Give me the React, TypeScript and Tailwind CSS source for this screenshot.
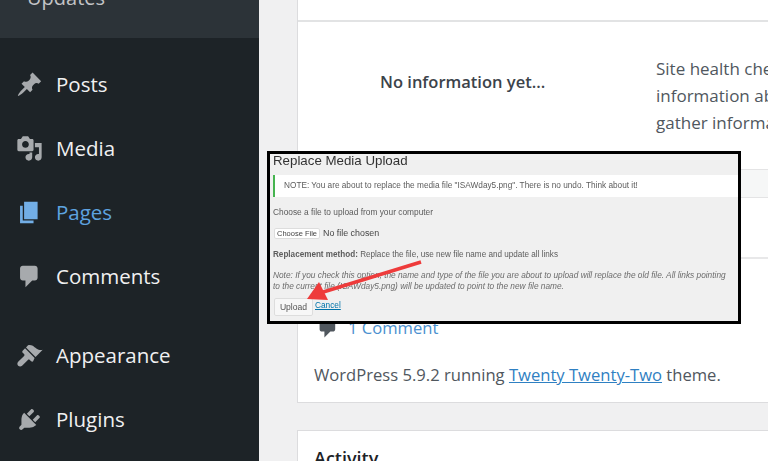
import React from "react";

const ICONS = {
  post: "M10.44 3.02l1.82-1.82 6.36 6.35-1.83 1.82c-1.05-.68-2.48-.57-3.41.36l-.75.75c-.92.93-1.04 2.35-.35 3.41l-1.83 1.82-2.41-2.41-2.8 2.79c-.42.42-3.38 2.71-3.8 2.29s1.86-3.39 2.28-3.81l2.79-2.79L4.1 9.36l1.83-1.82c1.05.69 2.48.57 3.4-.36l.75-.75c.93-.92 1.05-2.35.36-3.41z",
  media: "M13 11V4c0-.55-.45-1-1-1h-1.67L9 1H5L3.67 3H2c-.55 0-1 .45-1 1v7c0 .55.45 1 1 1h10c.55 0 1-.45 1-1zM7 4.5c1.38 0 2.5 1.12 2.5 2.5S8.38 9.5 7 9.5 4.5 8.38 4.5 7 5.62 4.5 7 4.5zM14 6h5v10.5c0 1.38-1.12 2.5-2.5 2.5S14 17.88 14 16.5s1.12-2.5 2.5-2.5c.17 0 .34.02.5.05V9h-3V6zm-4 8.05V13h2v3.5c0 1.38-1.12 2.5-2.5 2.5S7 17.88 7 16.5 8.12 14 9.5 14c.17 0 .34.02.5.05z",
  page: "M6 15V2h10v13H6zm-1 1h8v2H3V5h2v11z",
  comment: "M5 2h9c1.1 0 2 .9 2 2v7c0 1.1-.9 2-2 2h-2l-5 5v-5H5c-1.1 0-2-.9-2-2V4c0-1.1.9-2 2-2z",
  brush: "M14.48 11.06L7.41 3.99l1.5-1.5c.5-.56 2.3-.47 3.51.32 1.21.8 1.43 1.28 2.91 2.1 1.18.64 2.45 1.26 4.45.85zm-.71.71L6.7 4.7 4.93 6.47c-.39.39-.39 1.02 0 1.41l1.06 1.06c.39.39.39 1.03 0 1.42L1.6 14.7c-.8.8-.8 2.1 0 2.9s2.1.8 2.9 0l4.3-4.35c.39-.39 1.03-.39 1.42 0l1.06 1.06c.39.39 1.02.39 1.41 0z",
  plugin: "M13.11 4.36L9.87 7.6 8 5.73l3.24-3.24c.35-.34 1.05-.2 1.56.32.52.51.66 1.21.31 1.55zm-8 1.77l.91-1.12 9.01 9.01-1.19.84c-.71.71-2.63 1.16-3.82 1.16H6.14L4.9 17.26c-.59.59-1.54.59-2.12 0-.59-.58-.59-1.53 0-2.12l1.24-1.24v-3.88c0-1.13.4-3.19 1.09-3.89zm7.26 3.97l3.24-3.24c.34-.35 1.04-.21 1.55.31.52.51.66 1.21.31 1.55l-3.24 3.25z",
};

const Dash = ({ d, className }: { d: string; className: string }) => (
  <svg viewBox="0 0 20 20" className={className} fill="currentColor">
    <path d={d} />
  </svg>
);

const MenuItem = ({ icon, label, active }: { icon: string; label: string; active?: boolean }) => (
  <div className="flex h-16 items-center pl-[16px]">
    <Dash d={icon} className={active ? "h-[27px] w-[27px] text-[#72aee6]" : "h-[27px] w-[27px] text-[#a7aaad]"} />
    <span className={active ? "ml-[13px] text-[20.5px] text-[#5ea3e0]" : "ml-[13px] text-[20.5px] text-[#f0f0f1]"}>{label}</span>
  </div>
);

const Sidebar = () => (
  <aside className="w-[259px] shrink-0 bg-[#1d2327] font-['Open_Sans',sans-serif]">
    <div className="h-[38px] overflow-hidden bg-[#2c3338]">
      <div className="mt-[-18px] pl-[27px] text-[20px] leading-[32px] text-[#c3c4c7]">Updates</div>
    </div>
    <div className="pt-[14px]">
      <MenuItem icon={ICONS.post} label="Posts" />
      <MenuItem icon={ICONS.media} label="Media" />
      <MenuItem icon={ICONS.page} label="Pages" active />
      <MenuItem icon={ICONS.comment} label="Comments" />
      <div className="h-[15px]" />
      <MenuItem icon={ICONS.brush} label="Appearance" />
      <MenuItem icon={ICONS.plugin} label="Plugins" />
    </div>
  </aside>
);

const Dashboard = () => (
  <main className="min-w-0 flex-1 bg-[#f0f0f1] pl-[38px] font-['Open_Sans',sans-serif] text-[#50575e]">
    <section className="h-[403px] border-b border-l border-[#dcdcde] bg-white">
      <div className="h-[22px] border-b-2 border-[#e2e3e4]" />
      <div className="flex h-[147px] overflow-hidden">
        <div className="w-[358px] shrink-0 pl-[82px] pt-[46px] text-[16.5px] leading-[27px] font-semibold whitespace-nowrap text-[#3c434a]">
          No information yet...
        </div>
        <div className="shrink-0 pt-[33px] text-[17px] leading-[27px] whitespace-nowrap">
          <p>Site health checks will automatically run</p>
          <p>information about your site. You can also</p>
          <p>gather information now.</p>
        </div>
      </div>
      <div className="h-[29px] border-y border-[#e4e4e5] bg-[#f6f7f7]" />
      <div className="h-[61px] border-b-2 border-[#e8e8e9]" />
      <div className="flex h-[86px] items-end gap-[8px] pb-[5px] pl-[18px]">
        <Dash d={ICONS.comment} className="h-[24px] w-[24px] text-[#50575e]" />
        <span className="text-[16.6px] leading-[24px] text-[#4a90cf]">1 Comment</span>
      </div>
      <p className="mt-[16px] pl-[16px] text-[16.6px] leading-[27px]">
        WordPress 5.9.2 running <span className="text-[#2f80c2] underline">Twenty Twenty-Two</span> theme.
      </p>
    </section>
    <section className="mt-[27px] h-[40px] border-t border-l border-[#dcdcde] bg-white pl-[16px] pt-[14px] text-[18px] leading-[27px] font-semibold text-[#1d2327]">
      Activity
    </section>
  </main>
);

const ReplaceDialog = () => (
  <div className="absolute left-[267px] top-[151px] h-[173px] w-[474px] border-[3px] border-black bg-[#f0f0f0] font-['Liberation_Sans',sans-serif] text-[#5c5c5c]">
    <div className="blur-[0.45px]">
      <h2 className="pl-[3px] text-[13.3px] leading-[14px] text-[#333]">Replace Media Upload</h2>
      <div className="mt-[7px] ml-[3px] flex h-[22px] items-center border-l-2 border-[#46b450] bg-white pl-[9px] text-[8.25px]">
        NOTE: You are about to replace the media file "ISAWday5.png". There is no undo. Think about it!
      </div>
      <div className="mt-[10px] pl-[3px] text-[8.35px] leading-[10px]">Choose a file to upload from your computer</div>
      <div className="mt-[11px] flex items-center pl-[4px]">
        <span className="flex h-[11px] w-[46px] items-center justify-center rounded-[2px] border border-[#ddd] bg-white text-[7.5px] text-[#444]">Choose File</span>
        <span className="ml-[3px] text-[8.9px] leading-[11px] text-[#444]">No file chosen</span>
      </div>
      <div className="mt-[11px] pl-[3px] text-[8.15px] leading-[10px]">
        <b>Replacement method:</b> Replace the file, use new file name and update all links
      </div>
      <div className="mt-[10px] pl-[3px] text-[8.3px] leading-[11px] italic text-[#6c6c6c]">
        Note: If you check this option, the name and type of the file you are about to upload will replace the old file. All links pointing
        <br />
        to the current file (ISAWday5.png) will be updated to point to the new file name.
      </div>
      <div className="mt-[6px] flex items-center pl-[4px]">
        <span className="flex h-[18px] w-[39px] items-center justify-center rounded-[2px] border border-[#ddd] bg-[#f7f7f7] text-[8.6px] text-[#555]">Upload</span>
        <span className="mb-[3px] ml-[2px] text-[8.3px] text-[#0073aa] underline">Cancel</span>
      </div>
    </div>
    <svg className="absolute left-[30px] top-[100px]" width="130" height="60" viewBox="0 0 130 60" fill="none">
      <path d="M121 8 L20 39" stroke="#ee3b3b" strokeWidth="3.5" />
      <path d="M7 45 L19 28 L28 46 Z" fill="#ee3b3b" />
    </svg>
  </div>
);

export default function App() {
  return (
    <div className="relative flex h-[461px] w-[768px] overflow-hidden">
      <Sidebar />
      <Dashboard />
      <ReplaceDialog />
    </div>
  );
}
